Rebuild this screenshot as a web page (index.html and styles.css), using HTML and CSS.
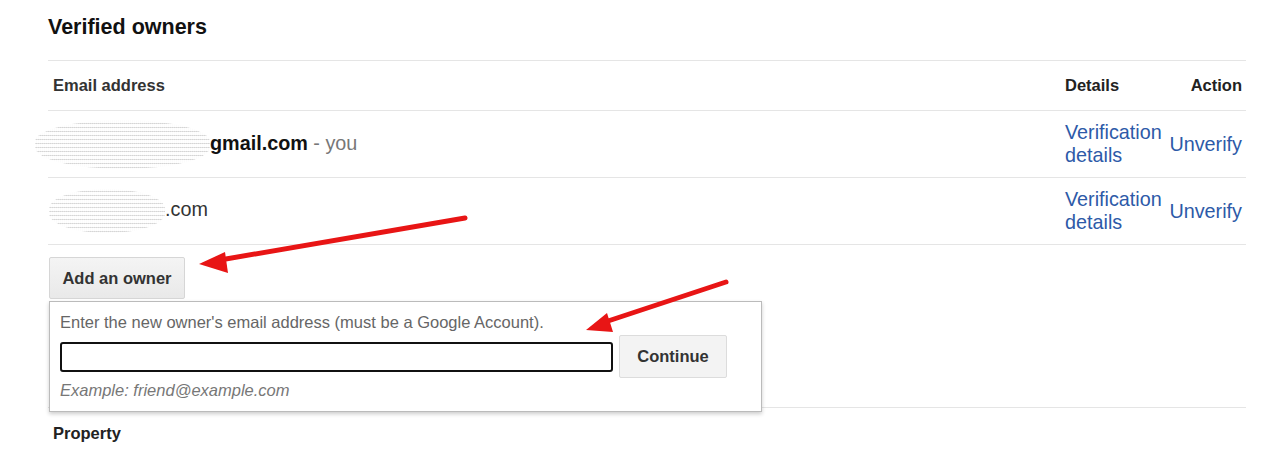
FILE: index.html
```html
<!DOCTYPE html>
<html>
<head>
<meta charset="utf-8">
<link rel="stylesheet" href="styles.css">
</head>
<body>
<div class="page">
  <h1 class="title">Verified owners</h1>
  <div class="table">
    <div class="row head">
      <div class="c-email">Email address</div>
      <div class="c-details">Details</div>
      <div class="c-action">Action</div>
    </div>
    <div class="row">
      <div class="c-email"><span class="blur blur1"></span><b>gmail.com</b> <span class="you">- you</span></div>
      <div class="c-details"><a class="link">Verification details</a></div>
      <div class="c-action"><a class="link">Unverify</a></div>
    </div>
    <div class="row">
      <div class="c-email"><span class="blur blur2"></span>.com</div>
      <div class="c-details"><a class="link">Verification details</a></div>
      <div class="c-action"><a class="link">Unverify</a></div>
    </div>
  </div>
  <div class="add-wrap">
    <button class="btn add-btn">Add an owner</button>
    <div class="popup">
      <div class="hint">Enter the new owner's email address (must be a Google Account).</div>
      <div class="form-row">
        <input class="email-input" type="text">
        <button class="btn continue-btn">Continue</button>
      </div>
      <div class="example">Example: friend@example.com</div>
    </div>
  </div>
  <div class="section">Property</div>
</div>
<svg class="arrows" width="1286" height="451" viewBox="0 0 1286 451">
  <line x1="465" y1="218" x2="220" y2="260" stroke="#e81515" stroke-width="5" stroke-linecap="round"/>
  <polygon points="199,264 225,252 228,273" fill="#e81515"/>
  <line x1="726" y1="282" x2="605" y2="322" stroke="#e81515" stroke-width="5" stroke-linecap="round"/>
  <polygon points="586,330 607,313 613,332" fill="#e81515"/>
</svg>
</body>
</html>
```
FILE: styles.css
```css
* { box-sizing: border-box; }
body {
  margin: 0;
  font-family: "Liberation Sans", Arial, sans-serif;
  color: #222;
  background: #fff;
  position: relative;
}
.page {
  padding: 0 40px 0 48px;
  box-sizing: content-box;
  width: 1198px;
}
.title {
  margin: 0;
  font-size: 21.5px;
  font-weight: bold;
  color: #111;
  height: 60px;
  padding-top: 15px;
  line-height: 25px;
}
.table { border-top: 1px solid #e5e5e5; }
.row {
  display: grid;
  grid-template-columns: 1fr 100px 73px;
  column-gap: 4px;
  align-items: center;
  border-bottom: 1px solid #e5e5e5;
  height: 67px;
  padding: 0 4px 0 5px;
  font-size: 19.8px;
  line-height: 23px;
  color: #222;
}
.row.head {
  height: 50px;
  font-size: 16.5px;
  font-weight: bold;
  color: #222;
  padding-bottom: 1px;
}
.c-details { white-space: normal; }
.c-action { text-align: right; white-space: nowrap; }
.link { color: #2d5aa8; text-decoration: none; }
.c-email { white-space: pre; color: #333; }
.c-email b { color: #111; }
.you { color: #777; }
.blur {
  display: inline-block;
  vertical-align: middle;
  border-radius: 50% / 45%;
  background:
    repeating-linear-gradient(0deg, rgba(255,255,255,0.9) 0 1px, rgba(200,200,200,0.55) 1px 2px, rgba(255,255,255,0.9) 2px 4px),
    repeating-linear-gradient(90deg, #fff 0 1px, #ddd 1px 2px);
  opacity: 0.9;
}
.blur1 { width: 175px; height: 49px; margin-left: -18px; }
.blur2 { width: 116px; height: 44px; margin-left: -4px; }
.add-wrap {
  position: relative;
  padding-top: 12px;
  height: 163px;
  border-bottom: 1px solid #e5e5e5;
}
.btn {
  font-family: "Liberation Sans", Arial, sans-serif;
  font-weight: bold;
  font-size: 16.5px;
  color: #333;
  background: linear-gradient(#f4f4f4, #e9e9e9);
  border: 1px solid #d6d6d6;
  border-radius: 2px;
  cursor: pointer;
}
.add-btn {
  margin-left: 1px;
  width: 136px;
  height: 42px;
  padding: 0;
}
.popup {
  position: absolute;
  left: 1px;
  top: 56px;
  width: 713px;
  height: 111px;
  background: #fff;
  border: 1px solid #bbb;
  box-shadow: 0 2px 4px rgba(0,0,0,0.2);
  padding: 10px 10px 0 10px;
  z-index: 2;
}
.hint {
  font-size: 16.5px;
  color: #666;
  line-height: 20px;
}
.form-row {
  display: flex;
  align-items: center;
  gap: 6px;
  margin-top: 3px;
}
.email-input {
  width: 553px;
  height: 30px;
  border: 2px solid #111;
  border-radius: 3px;
  outline: none;
}
.continue-btn {
  width: 108px;
  height: 43px;
  background: #f3f3f3;
  border: 1px solid #dcdcdc;
}
.example {
  font-style: italic;
  font-size: 16.5px;
  color: #777;
  margin-top: 2px;
  line-height: 20px;
}
.section {
  font-weight: bold;
  font-size: 16.5px;
  color: #222;
  padding: 15px 5px 0;
  line-height: 20px;
}
.arrows {
  position: absolute;
  left: 0;
  top: 0;
  pointer-events: none;
  z-index: 5;
}
```
